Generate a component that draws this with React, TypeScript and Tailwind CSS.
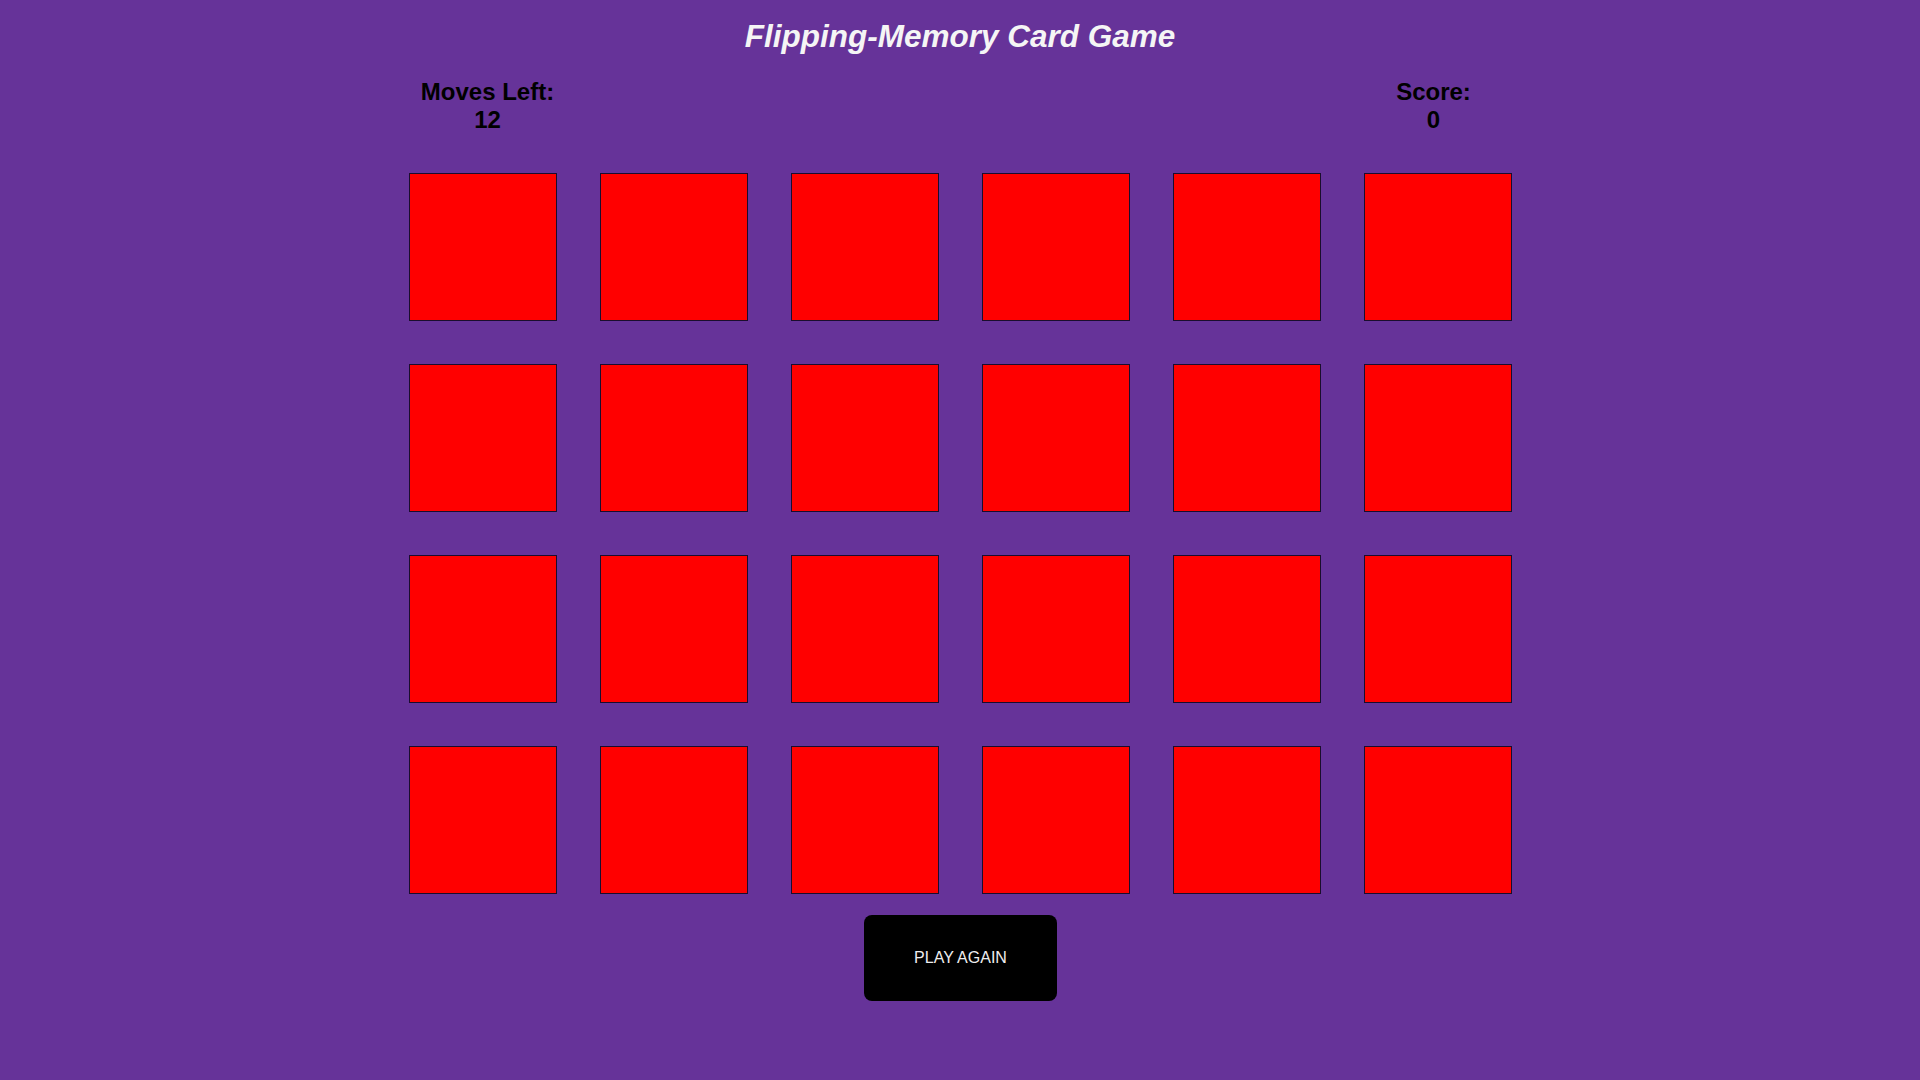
export default function App() {
  const cards = Array.from({ length: 24 }, (_, i) => i);

  return (
    <div className="min-h-screen w-full bg-[#663399] font-['Liberation_Sans',Arial,sans-serif]">
      <div className="flex flex-col items-center">
        <h1 className="mt-[18px] text-[31.5px] leading-[36px] font-bold italic text-[#f5f5f5]">
          Flipping-Memory Card Game
        </h1>

        <div className="mt-[24px] flex w-[1103px] justify-between pl-px">
          <div className="w-[156px] text-center text-[24px] leading-[28px] font-bold text-black">
            <div>Moves Left:</div>
            <div>12</div>
          </div>
          <div className="w-[156px] text-center text-[24px] leading-[28px] font-bold text-black">
            <div>Score:</div>
            <div>0</div>
          </div>
        </div>

        <div className="mt-[39px] ml-px grid grid-cols-6 gap-[43px]">
          {cards.map((i) => (
            <div key={i} className="size-[148px] border border-[#1a0d2e] bg-[#ff0000]" />
          ))}
        </div>

        <button
          type="button"
          className="mt-[21px] ml-px flex h-[86px] w-[193px] items-center justify-center rounded-[8px] bg-black text-[16px] text-[#eeeeee]"
        >
          PLAY AGAIN
        </button>
      </div>
    </div>
  );
}
